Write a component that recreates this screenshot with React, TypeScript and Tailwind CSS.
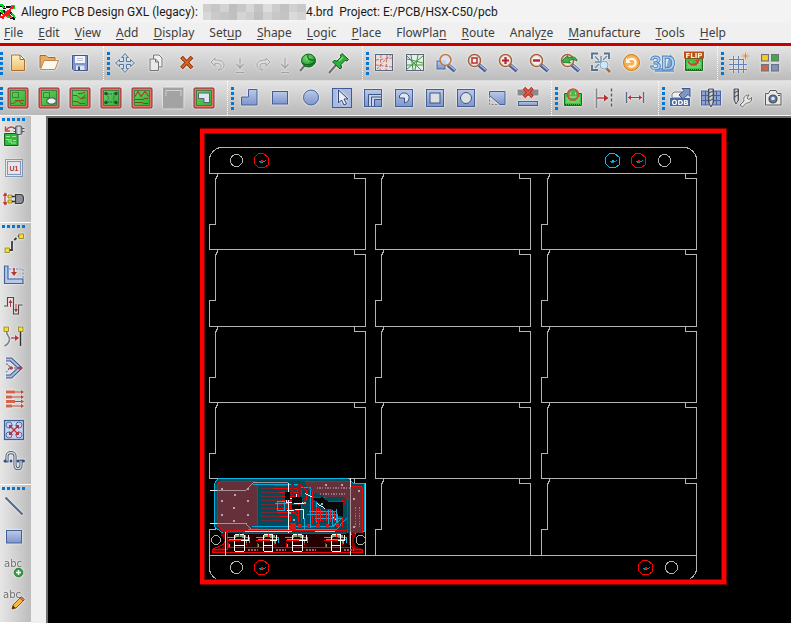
import type { ReactNode } from 'react';

interface Tool {
  name: string;
  icon: ReactNode;
  narrow?: boolean;
  active?: boolean;
}

const MENUS: [string, number][] = [
  ['File', 0],
  ['Edit', 0],
  ['View', 0],
  ['Add', 0],
  ['Display', 0],
  ['Setup', 3],
  ['Shape', 0],
  ['Logic', 0],
  ['Place', 0],
  ['FlowPlan', 7],
  ['Route', 0],
  ['Analyze', 5],
  ['Manufacture', 0],
  ['Tools', 0],
  ['Help', 0],
];

const MASK = [
  'bg-[#cfcfcf]', 'bg-[#c6c6c6]', 'bg-[#d2d2d2]', 'bg-[#bebebe]', 'bg-[#c8c8c8]', 'bg-[#d6d6d6]',
  'bg-[#c4c4c4]', 'bg-[#dcdcdc]', 'bg-[#cccccc]', 'bg-[#c2c2c2]', 'bg-[#d0d0d0]', 'bg-[#c9c9c9]',
  'bg-[#d8d8d8]', 'bg-[#cacaca]', 'bg-[#c5c5c5]', 'bg-[#c0c0c0]', 'bg-[#d4d4d4]', 'bg-[#cdcdcd]',
  'bg-[#bfbfbf]', 'bg-[#d1d1d1]', 'bg-[#c7c7c7]', 'bg-[#c3c3c3]', 'bg-[#dadada]', 'bg-[#d3d3d3]',
];

const Gradients = () => (
  <svg className="absolute size-0" aria-hidden="true">
    <defs>
      <linearGradient id="blue" x1="0" y1="0" x2="0" y2="1">
        <stop offset="0" stopColor="#bccae9" />
        <stop offset="1" stopColor="#7f95ca" />
      </linearGradient>
      <linearGradient id="paper" x1="0" y1="0" x2="0" y2="1">
        <stop offset="0" stopColor="#fdf0c8" />
        <stop offset="1" stopColor="#eebf6c" />
      </linearGradient>
      <linearGradient id="board" x1="0" y1="0" x2="1" y2="1">
        <stop offset="0" stopColor="#6bd05f" />
        <stop offset="1" stopColor="#2fb235" />
      </linearGradient>
      <linearGradient id="metal" x1="0" y1="0" x2="1" y2="0">
        <stop offset="0" stopColor="#6b6f76" />
        <stop offset="0.5" stopColor="#e6e9ee" />
        <stop offset="1" stopColor="#767b84" />
      </linearGradient>
      <radialGradient id="pinhead" cx="0.4" cy="0.3" r="0.7">
        <stop offset="0" stopColor="#7de077" />
        <stop offset="1" stopColor="#148a25" />
      </radialGradient>
    </defs>
  </svg>
);

const Icon = ({ children }: { children: ReactNode }) => (
  <svg viewBox="0 0 24 24" fill="none" className="size-6 shrink-0 overflow-visible drop-shadow-[0_0_1px_#ffffff]" aria-hidden="true">
    {children}
  </svg>
);

const Lens = ({ children }: { children?: ReactNode }) => (
  <>
    <path d="M14 14l7 6" stroke="#4c5f92" strokeWidth="4" />
    <path d="M15 14l6 5" stroke="#a9b9de" strokeWidth="1.5" />
    <circle cx="9.5" cy="9.5" r="6" fill="#eef0f5" stroke="#a4623a" strokeWidth="1.6" />
    <circle cx="9.5" cy="9.5" r="5" stroke="#e2b48e" strokeWidth="0.8" />
    {children}
  </>
);

const GreenBoard = ({ children }: { children: ReactNode }) => (
  <>
    <rect x="2" y="2" width="20" height="20" rx="1" fill="#ea6f68" stroke="#7d2a2c" />
    <rect x="4.5" y="4.5" width="15" height="15" fill="url(#board)" stroke="#2c7a35" strokeWidth="0.8" />
    {children}
  </>
);

const BlueBox = ({ children }: { children?: ReactNode }) => (
  <>
    <rect x="3.5" y="3.5" width="17" height="17" fill="url(#blue)" stroke="#42609a" />
    {children}
  </>
);

const SmallBoard = () => (
  <>
    <path d="M3.5 7.5h17v12h-17z" fill="#43c243" stroke="#1d6a26" />
    <path d="M4 18.500h16" stroke="#145a1c" strokeDasharray="1 1" />
    <path d="M6 11h3v3H6zM15 11h3v3h-3zM5 16h14" stroke="#a6ee98" strokeWidth="0.800" />
  </>
);

const undo = <path d="M9 5L5 9l4 4v-2.500c4 0 6 0 6 2.500s-1 3-3 4c4 0 6-2 6-5 0-4-4-5-9-5z" stroke="#a0a0a0" />;
const drop = <path d="M12 7v9M8.500 13l3.500 4 3.500-4M8 21.500h8" stroke="#a2a2a2" strokeWidth="1.200" />;

const FILE_TOOLS: Tool[] = [
  {
    name: 'New',
    icon: (
      <>
        <path d="M5.500 4H14l4.500 4.500V19.500h-13z" fill="url(#paper)" stroke="#a9722c" />
        <path d="M14 4v4.500h4.500z" fill="#fff3d2" stroke="#a9722c" />
      </>
    ),
  },
  {
    name: 'Open',
    icon: (
      <>
        <path d="M3 17V4.500h6l2 2h7V10" fill="#e9ac5c" stroke="#a9682c" />
        <path d="M3.500 18.500L7 9.500h14.500l-3.500 9z" fill="#fdf7ee" stroke="#b78a5a" />
      </>
    ),
  },
  {
    name: 'Save',
    icon: (
      <>
        <path d="M4.500 4.500h15v15H6L4.500 18z" fill="#7f95ce" stroke="#43558c" />
        <path d="M7 5h10v7H7z" fill="#f4f6fb" />
        <path d="M9 7.500h6M9 9.500h6" stroke="#b8c0d4" />
        <path d="M8 14.500h8.500V19H8z" fill="#dfe4f0" />
        <path d="M10 15.500h2v3.500h-2z" fill="#3d4f88" />
      </>
    ),
  },
];

const EDIT_TOOLS: Tool[] = [
  {
    name: 'Move',
    icon: (
      <path
        d="M12 2.500l3.500 4h-2v4h4v-2l4 3.500-4 3.500v-2h-4v4h2l-3.500 4-3.500-4h2v-4h-4v2l-4-3.500 4-3.500v2h4v-4h-2z"
        fill="#c9d8e8"
        stroke="#4b6a8a"
        strokeWidth="0.900"
      />
    ),
  },
  {
    name: 'Copy',
    icon: (
      <>
        <path d="M9.500 4h5.500l3 3v9H9.500z" fill="#f1f1f1" stroke="#757575" />
        <path d="M6 8h5.500l3 3v8.500H6z" fill="#e9e9e9" stroke="#757575" />
        <path d="M11.500 8v3h3" stroke="#757575" />
      </>
    ),
  },
  {
    name: 'Delete',
    icon: (
      <>
        <path d="M6.500 6l10.500 11M17 6l-10.500 11" stroke="#7d2a08" strokeWidth="3.800" />
        <path d="M7 6.500l9.500 10M16.500 6.500l-9.500 10" stroke="#d9661e" strokeWidth="2" />
      </>
    ),
  },
  { name: 'Undo', icon: <g transform="translate(0 2)">{undo}</g> },
  { name: 'Undo list', icon: drop, narrow: true },
  { name: 'Redo', icon: <g transform="translate(24 2) scale(-1 1)">{undo}</g> },
  { name: 'Redo list', icon: drop, narrow: true },
  {
    name: 'Fix',
    icon: (
      <>
        <path d="M10 13l-6 7" stroke="#6f6f6f" strokeWidth="2" />
        <ellipse cx="12.500" cy="9.500" rx="7" ry="6.500" fill="url(#pinhead)" stroke="#0b5d17" />
        <path d="M7 12c2 3 9 2 12-1M12 4c-1 3 1 6 7 5" stroke="#0b6a18" strokeWidth="1.300" />
      </>
    ),
  },
  {
    name: 'Unfix',
    icon: (
      <>
        <path d="M9 14l-7 8" stroke="#6f6f6f" strokeWidth="2" />
        <path d="M15 2.500l6.500 6-1.500 1.500-2-.5-4 4 .5 3.500-1.500 1-7.500-7 1.500-1.500 3 .5 4-4-.5-2z" fill="#2fae3d" stroke="#0b5d17" />
        <path d="M12 10l4-4" stroke="#88de85" strokeWidth="1.500" />
      </>
    ),
  },
];

const VIEW_TOOLS: Tool[] = [
  {
    name: 'Unrats all',
    icon: (
      <>
        <rect x="3.500" y="3.500" width="17" height="16" fill="#e6dedc" stroke="#5b677e" />
        <path d="M9 4l-1 15M15 4l-1 15M4 9l16-2M4 14l16 2M5 18l8-9 6-5" stroke="#bf625c" strokeWidth="0.900" strokeDasharray="3 1.500" />
      </>
    ),
  },
  {
    name: 'Rats all',
    icon: (
      <>
        <rect x="3.500" y="3.500" width="17" height="16" fill="#e6efe4" stroke="#5b677e" />
        <path d="M8 4l2 15M15 4l-3 15M4 8l16 4M4 14h16M4 18L20 5M4 5l14 14" stroke="#3f9848" />
      </>
    ),
  },
  {
    name: 'Zoom window',
    icon: (
      <>
        <path d="M14 14l7 6" stroke="#4c5f92" strokeWidth="4" />
        <path d="M15 14l6 5" stroke="#a9b9de" strokeWidth="1.500" />
        <rect x="3" y="10" width="8" height="8" fill="url(#blue)" stroke="#4663a0" />
        <circle cx="11.500" cy="9" r="5.500" fill="#cfdcf2" fillOpacity="0.800" stroke="#c07a3c" strokeWidth="1.500" />
      </>
    ),
  },
  { name: 'Zoom fit', icon: <Lens><rect x="7" y="7" width="5" height="5" fill="#fff" stroke="#ba2a30" strokeWidth="1.500" /></Lens> },
  { name: 'Zoom in', icon: <Lens><path d="M6 9.500h7M9.500 6v7" stroke="#b4232c" strokeWidth="2.200" /></Lens> },
  { name: 'Zoom out', icon: <Lens><path d="M6 9.500h7" stroke="#b4232c" strokeWidth="2.400" /></Lens> },
  {
    name: 'Zoom previous',
    icon: (
      <Lens>
        <path d="M4.500 9L10 4.500V7c5-2 9-1 9 3-3-2-6-1.500-8 0L12.500 12 5 11.500z" fill="#3db348" stroke="#146b20" strokeWidth="0.800" />
      </Lens>
    ),
  },
  {
    name: 'Zoom world',
    icon: (
      <>
        <path d="M3 8V2.500h6M15 2.500h5V8M3 14v5h6" stroke="#567089" strokeWidth="1.800" />
        <path d="M6 5.500l4 4M18 5l-4 4M6 17l4-4M12 5v12M6 11h12" stroke="#6b87a2" strokeWidth="1.300" />
        <path d="M17 17l4 4" stroke="#ab6b32" strokeWidth="2.500" />
        <circle cx="15" cy="14" r="4" fill="#cde6f8" stroke="#88aac4" />
      </>
    ),
  },
  {
    name: 'Refresh',
    icon: (
      <>
        <circle cx="11.500" cy="11.500" r="8" fill="#f8b04e" stroke="#c27420" />
        <path d="M7.500 10c2-3.500 8-2.500 8 1.500s-4 5-7 3.500" stroke="#fff8e8" strokeWidth="2.200" />
        <path d="M6 6.500V12h5z" fill="#fff8e8" />
      </>
    ),
  },
  {
    name: '3D view',
    icon: (
      <>
        <path d="M4 21h19V7l-4-4-4 14H4z" fill="#7ea6d4" />
        <text x="-1" y="19" fontSize="20" fontWeight="700" className="font-['Liberation_Sans']" fill="#b4d1ef" stroke="#4a80b8" strokeWidth="0.900">3D</text>
      </>
    ),
  },
  {
    name: 'Flip design',
    icon: (
      <>
        <SmallBoard />
        <path d="M6.500 10c1 5 9 5 10-1l-3 1" stroke="#d0413a" strokeWidth="1.800" />
        <rect x="2" y="0.500" width="20" height="7" fill="#bd4f14" />
        <text x="12" y="6.500" fontSize="7" fontWeight="700" textAnchor="middle" fill="#fff3d8" className="font-['DejaVu_Sans']">FLIP</text>
      </>
    ),
  },
];

const GRID_TOOLS: Tool[] = [
  {
    name: 'Grid toggle',
    icon: (
      <>
        <path d="M6.500 5v17M11.500 5v17M16.500 8v14M2 8.500h15M2 13.500h18M2 18.500h18" stroke="#6480b8" />
        <path d="M18.500 1v8M14.500 5h8M16 2.500l5 5M21 2.500l-5 5" stroke="#d3832c" strokeWidth="0.800" />
      </>
    ),
  },
  {
    name: 'Color',
    icon: (
      <g stroke="#70737c" strokeWidth="1.200">
        <rect x="3.500" y="3.500" width="7" height="6.500" fill="#f9cb20" />
        <rect x="13.500" y="3.500" width="7" height="6.500" fill="#40ad42" />
        <rect x="3.500" y="13.500" width="7" height="6.500" fill="#ce684a" />
        <rect x="13.500" y="13.500" width="7" height="6.500" fill="#7d92c9" />
      </g>
    ),
  },
  { name: 'Shadow mode', icon: <rect x="3.500" y="4" width="17" height="16" fill="#cfd3da" stroke="#b8bbc2" /> },
];

const APP_MODE_TOOLS: Tool[] = [
  {
    name: 'General edit',
    icon: (
      <GreenBoard>
        <rect x="6.500" y="6.500" width="6" height="5" stroke="#174c1d" strokeDasharray="1 1" />
        <path d="M5 17.500c5 0 5-3 8-3h5M9 14.500h4l2 3h2" stroke="#8e4a24" />
      </GreenBoard>
    ),
  },
  {
    name: 'Placement edit',
    icon: (
      <GreenBoard>
        <rect x="6.500" y="6.500" width="6" height="5" stroke="#174c1d" strokeDasharray="1 1" />
        <path d="M10 13h2v-1h5v1h2v4h-2v1h-5v-1h-2z" fill="#eef0f5" stroke="#4a5460" />
      </GreenBoard>
    ),
  },
  {
    name: 'Etch edit',
    icon: (
      <GreenBoard>
        <path d="M5 9.500h4l3 3h2l4-1M10 7.500h3l4-1M5 15.500h4l3 2h5M17.500 9l-4 3.500" stroke="#8a4a20" />
      </GreenBoard>
    ),
  },
  {
    name: 'Flow planning',
    icon: (
      <GreenBoard>
        <path d="M9 8h6M9 16h6M8 9.500c2 2 2 3 0 5M16 9.500c-2 2-2 3 0 5" stroke="#20408c" strokeWidth="0.900" strokeDasharray="1.500 1" />
        <circle cx="7" cy="7.500" r="1.800" fill="#24503c" />
        <circle cx="17" cy="7.500" r="1.800" fill="#24503c" />
        <circle cx="7" cy="16.500" r="1.800" fill="#24503c" />
        <circle cx="17" cy="16.500" r="1.800" fill="#24503c" />
      </GreenBoard>
    ),
  },
  {
    name: 'Signal integrity',
    icon: (
      <GreenBoard>
        <path d="M5 10.500l3-5 3 5 4-5 4 5" stroke="#b03c2c" strokeWidth="1.200" />
        <path d="M5 13.500h8l2-1h3M5 16.500h7l2 1h4" stroke="#7c4a22" />
      </GreenBoard>
    ),
  },
  {
    name: 'RF edit',
    icon: (
      <>
        <rect x="2" y="1.500" width="20.500" height="21" fill="#a3a3a3" />
        <path d="M5 10V4.500h15V10" stroke="#d2d2d2" />
      </>
    ),
  },
  {
    name: 'Shape edit',
    icon: (
      <GreenBoard>
        <path d="M6.500 7h11v9.500H12v-4H6.500z" fill="#dfe5f0" stroke="#56617a" />
      </GreenBoard>
    ),
  },
];

const SHAPE_TOOLS: Tool[] = [
  { name: 'Add polygon', icon: <path d="M11.500 3.500h8.500v15.500H4.500v-8h7z" fill="url(#blue)" stroke="#42609a" /> },
  { name: 'Add rectangle', icon: <rect x="4.500" y="5.500" width="15" height="12.500" fill="url(#blue)" stroke="#42609a" /> },
  { name: 'Add circle', icon: <circle cx="12" cy="11.500" r="7.500" fill="url(#blue)" stroke="#42609a" /> },
  {
    name: 'Select shape',
    active: true,
    icon: <path d="M8.500 4v13l3-3 2.500 5 2.500-1-2.500-5h4z" fill="#eceff7" stroke="#2e4470" />,
  },
  {
    name: 'Shape void polygon',
    icon: (
      <BlueBox>
        <path d="M7.500 20V8.500H20v5h-6V20z" fill="#c9d4ee" />
        <path d="M7.500 20V8.500H20M10.500 20v-9H20M13.500 20v-6.500H20" stroke="#3d5584" />
      </BlueBox>
    ),
  },
  {
    name: 'Void element',
    icon: (
      <BlueBox>
        <path d="M7.500 10a5 5 0 1 1 5 7v-5h-5z" fill="#e1e6f3" stroke="#3d5584" />
      </BlueBox>
    ),
  },
  { name: 'Void rectangle', icon: <BlueBox><rect x="7" y="7" width="10" height="10" fill="#dedfe3" stroke="#3d5584" /></BlueBox> },
  { name: 'Void circle', icon: <BlueBox><circle cx="12" cy="12" r="5.500" fill="#dedfe3" stroke="#3d5584" /></BlueBox> },
  {
    name: 'Island delete',
    icon: (
      <>
        <path d="M4.500 5.500h15.500v13h-5l-10.500-9z" fill="url(#blue)" stroke="#42609a" />
        <path d="M4.500 10v8.500h10" stroke="#7b7f89" strokeDasharray="2 1.500" />
      </>
    ),
  },
  {
    name: 'Delete islands',
    icon: (
      <>
        <rect x="1.500" y="3.500" width="21" height="6" fill="#8b8b8b" />
        <path d="M8 2l8.500 9M16.500 2l-8.500 9" stroke="#b52c20" strokeWidth="3.400" />
        <path d="M8.500 2.500l7.500 8M16 2.500l-7.500 8" stroke="#e3604b" strokeWidth="1.600" />
        <rect x="2.500" y="15.500" width="19" height="4" fill="url(#blue)" stroke="#42609a" />
      </>
    ),
  },
];

const DIMENSION_TOOLS: Tool[] = [
  {
    name: 'Dimension environment',
    icon: (
      <>
        <SmallBoard />
        <circle cx="12" cy="8.500" r="5.500" fill="#52b64c" stroke="#d9483f" strokeWidth="1.700" />
        <path d="M9.500 6.500v2M14.500 6.500v2M8.500 11h7" stroke="#a6ee98" />
      </>
    ),
  },
  {
    name: 'Align',
    icon: (
      <>
        <path d="M4.500 2.500V22" stroke="#80858e" strokeWidth="1.500" />
        <path d="M19.500 2.500V22" stroke="#555c68" strokeWidth="1.500" strokeDasharray="3 2" />
        <path d="M5 12h8" stroke="#b52d33" strokeWidth="1.300" />
        <path d="M12 8.500l4.500 3.500-4.500 3.500z" fill="#b52d33" />
      </>
    ),
  },
  {
    name: 'Linear dimension',
    icon: (
      <>
        <path d="M3.500 6v11M20.500 6v11" stroke="#576a88" strokeWidth="1.400" />
        <path d="M5 11.500h14" stroke="#b8363a" />
        <path d="M5 11.500l3-2.500v5zM19 11.500L16 9v5z" fill="#b8363a" />
      </>
    ),
  },
];

const OUTPUT_TOOLS: Tool[] = [
  {
    name: 'ODB++ export',
    icon: (
      <>
        <path d="M6 6h8v6H4V8z" fill="#eee" stroke="#777" />
        <path d="M11 9l5-4.500-2-2h8v8l-2-2-5 4.500z" fill="#7f96c4" stroke="#3c5589" />
        <rect x="2" y="12" width="20" height="8" fill="#4967a3" />
        <text x="12" y="18.500" fontSize="7" fontWeight="700" textAnchor="middle" fill="#fff" className="font-['DejaVu_Sans']">ODB</text>
      </>
    ),
  },
  {
    name: 'Drill legend',
    icon: (
      <>
        <rect x="2.500" y="5" width="19" height="14" fill="#8fa3d0" stroke="#4a62a0" />
        <path d="M2 9.500h20M2 14.500h20M6.500 5v14M17.500 5v14" stroke="#4a62a0" />
        <path d="M9.500 3h5v13L12 21l-2.500-5z" fill="url(#metal)" stroke="#474c54" />
        <path d="M10 7l4-2M10 11l4-2M10 15l4-2" stroke="#41464e" />
      </>
    ),
  },
  {
    name: 'NC parameters',
    icon: (
      <>
        <path d="M4 3h4.500v11L6 18l-2-4z" fill="url(#metal)" stroke="#474c54" />
        <path d="M4 7l4-2M4 11l4-2" stroke="#41464e" />
        <path d="M10 19l4-4c-1-4 1-6 5-6l-2 3 2 1.500 2.500-2c.5 4-1.500 5.500-5 5.500l-4 4z" fill="#e7e7e7" stroke="#666" />
      </>
    ),
  },
  {
    name: 'Snapshot',
    icon: (
      <>
        <path d="M4.500 7.500h3l1.500-3h6l1.500 3H20V19H4.500z" fill="#e9e9ea" stroke="#595959" />
        <circle cx="12" cy="13" r="4" fill="#62779c" stroke="#4b4b4b" strokeWidth="1.200" />
        <circle cx="12" cy="12.500" r="1.800" fill="#dce9f8" />
        <path d="M17 9.500h2" stroke="#555" />
      </>
    ),
  },
];

const PLACE_TOOLS: Tool[] = [
  {
    name: 'Place manual',
    icon: (
      <>
        <path d="M2.500 8.500H16v12H2.500z" fill="#33b83d" stroke="#0e641a" />
        <path d="M4 11.500h4M10 11.500h4M4 14.500h3v3M9 14v4h5M11 15.500h3" stroke="#a6f09e" strokeWidth="0.900" />
        <path d="M13 3.500C10 1 6 2 4.500 5M3.500 1.500V6H8" stroke="#c4433a" strokeWidth="1.500" />
        <path d="M11.500 3.500h2M11.500 6.500h2M20 3.500h2.500M20 6.500h2.500" stroke="#555" />
        <rect x="13.500" y="1" width="6.500" height="8.500" rx="1.500" fill="url(#metal)" stroke="#4d525b" />
      </>
    ),
  },
  {
    name: 'Place by refdes',
    icon: (
      <>
        <rect x="3.500" y="3.500" width="17" height="17" stroke="#31508f" strokeDasharray="1 1" />
        <rect x="5.500" y="5.500" width="13" height="13" fill="#e4e5ea" stroke="#8094ba" />
        <text x="12" y="14.500" fontSize="7" fontWeight="700" textAnchor="middle" fill="#b5383a" className="font-['Liberation_Sans']">U1</text>
      </>
    ),
  },
  {
    name: 'Swap components',
    icon: (
      <>
        <path d="M5 7H3v10h2M1.500 9L3 6.500 4.500 9M1.500 15L3 17.500 4.500 15" stroke="#bb352f" strokeWidth="1.200" />
        <path d="M6 8h4v3H6zM6 13h4v3H6z" fill="#f4d728" stroke="#8c761c" strokeWidth="0.800" />
        <path d="M10 9.500h4M10 14.500h4" stroke="#333" strokeWidth="1.500" />
        <path d="M13.500 7.500h5c4 0 4 9 0 9h-5z" fill="#8c8f95" stroke="#393b40" strokeWidth="1.200" />
      </>
    ),
  },
];

const yellowPad = (x: number, y: number) => (
  <rect x={x} y={y} width="4.500" height="4.500" fill="#f7df2e" stroke="#8c7c1c" strokeWidth="0.800" />
);

const ROUTE_TOOLS: Tool[] = [
  {
    name: 'Add connect',
    icon: (
      <>
        <path d="M7 18h3V10l8-7" stroke="#3b3b3b" strokeWidth="1.800" strokeDasharray="12 2 3 2" />
        {yellowPad(3, 16)}
        {yellowPad(17, 2)}
      </>
    ),
  },
  {
    name: 'Slide',
    icon: (
      <>
        <path d="M7 6h14v10H7" stroke="#6d8dc4" strokeDasharray="2 1.500" />
        <path d="M2.500 3H6v13h15v4.500H2.500z" fill="#b8c8e8" stroke="#42609a" strokeWidth="1.200" />
        <path d="M12 5v5" stroke="#b6343c" strokeWidth="1.500" />
        <path d="M9 9h6l-3 4z" fill="#b6343c" />
      </>
    ),
  },
  {
    name: 'Delay tune',
    icon: (
      <>
        <path d="M2 12h3.500V3.500H11.500V20h5v-9h4" stroke="#494949" strokeWidth="1.200" />
        <path d="M8.500 13V7M14 10v6" stroke="#b6343c" />
        <path d="M6.500 9l2-3.500 2 3.500zM12 15l2 3.500 2-3.500z" fill="#b6343c" />
      </>
    ),
  },
  {
    name: 'Custom smooth',
    icon: (
      <>
        <path d="M4.500 6c0 5 3 5 3 8s-1 5-5 7" stroke="#7a7f88" strokeWidth="1.600" />
        <path d="M18.500 6v15" stroke="#333" strokeWidth="1.500" />
        <path d="M9 13h6" stroke="#c22f35" strokeWidth="1.300" />
        <path d="M13 10l4 3-4 3z" fill="#c22f35" />
        {yellowPad(2, 2)}
        {yellowPad(16.500, 2)}
      </>
    ),
  },
  {
    name: 'Differential pair',
    icon: (
      <>
        <path d="M4 3.500h5l9 8.500-9 8.500H4" stroke="#3b5688" strokeWidth="4.200" />
        <path d="M4 3.500h5l9 8.500-9 8.500H4" stroke="#a9bce2" strokeWidth="2.200" />
        <path d="M4 8c6 0 2 8 0 8M9 12h8" stroke="#3b5688" strokeDasharray="2 1" />
        <circle cx="9" cy="12" r="1.800" fill="#c0353a" />
        <circle cx="18" cy="12" r="1.800" fill="#c0353a" />
      </>
    ),
  },
  {
    name: 'Fanout',
    icon: (
      <>
        <path d="M4 5h9M4 10h6M4 14.500h9M4 19h6" stroke="#d4644c" strokeWidth="3.200" />
        <path d="M13 5h7M10 10h10M13 14.500h7M10 19h10" stroke="#c2442e" />
        <path d="M19 3l3 2-3 2zM19 8l3 2-3 2zM19 12.500l3 2-3 2zM19 17l3 2-3 2z" fill="#c2442e" />
      </>
    ),
  },
  {
    name: 'Auto route',
    icon: (
      <>
        <rect x="2.500" y="2.500" width="19" height="19" fill="#c6d2ee" stroke="#3f5b98" strokeWidth="1.300" />
        <circle cx="7" cy="7" r="3" stroke="#526fa8" />
        <circle cx="17" cy="7" r="3" stroke="#526fa8" />
        <circle cx="7" cy="17" r="3" stroke="#526fa8" />
        <circle cx="17" cy="17" r="3" stroke="#526fa8" />
        <path d="M8 8l8 8M16 8l-8 8" stroke="#bc3038" strokeWidth="1.300" />
        <path d="M7 7h4l-4 4zM17 7v4l-4-4zM7 17v-4l4 4zM17 17h-4l4-4z" fill="#bc3038" />
      </>
    ),
  },
  {
    name: 'Phase tune',
    icon: (
      <>
        <path d="M3 12h2V7c0-4.500 8-4.500 8 0v9c0 5 6 5 6 0v-4h2" stroke="#526078" strokeWidth="3.200" />
        <path d="M5 12V7c0-4.500 8-4.500 8 0v9c0 5 6 5 6 0v-4" stroke="#dfe3ea" strokeWidth="1.200" />
        <circle cx="3" cy="12" r="1.500" fill="#314e86" />
        <circle cx="9" cy="12" r="1.500" fill="#314e86" />
        <circle cx="16" cy="12" r="1.500" fill="#314e86" />
        <circle cx="21.500" cy="12" r="1.500" fill="#314e86" />
      </>
    ),
  },
];

const DRAW_TOOLS: Tool[] = [
  { name: 'Add line', icon: <path d="M3.500 3.500l17 17" stroke="#4f668f" strokeWidth="2" /> },
  { name: 'Add rectangle outline', icon: <rect x="4.500" y="5.500" width="15" height="12.500" fill="url(#blue)" stroke="#42609a" /> },
  {
    name: 'Add text',
    icon: (
      <>
        <text x="2" y="11" fontSize="10" className="font-['DejaVu_Sans']" fill="#707070">abc</text>
        <circle cx="16.500" cy="16.500" r="4.300" fill="#2ea337" stroke="#187022" strokeWidth="0.800" />
        <path d="M14 16.500h5M16.500 14v5" stroke="#fff" strokeWidth="1.500" />
      </>
    ),
  },
  {
    name: 'Edit text',
    icon: (
      <>
        <text x="1" y="11" fontSize="10" className="font-['DejaVu_Sans']" fill="#707070">abc</text>
        <path d="M10 22l1-4 8-8 3 3-8 8z" fill="#f6b93c" stroke="#8f5418" />
        <path d="M18 11l3 3 1.500-1.500-3-3z" fill="#e5705a" stroke="#8f3b2a" strokeWidth="0.700" />
        <path d="M10 22l1-3.500 2.500 2.500z" fill="#3a2a1a" />
      </>
    ),
  },
];

const ToolButton = ({ tool }: { tool: Tool }) => (
  <button
    type="button"
    aria-label={tool.name}
    className={`flex h-[31px] shrink-0 items-center justify-center ${tool.narrow ? 'w-[14px]' : 'w-[31px]'}`}
  >
    {tool.active ? (
      <span className="flex size-5 items-center justify-center border border-[#3f5b94] bg-[#a9b9e0]">
        <Icon>{tool.icon}</Icon>
      </span>
    ) : (
      <Icon>{tool.icon}</Icon>
    )}
  </button>
);

const Handle = ({ vertical }: { vertical?: boolean }) => (
  <div className={vertical ? 'mt-[2px] ml-[2px] flex gap-[2px]' : 'mr-[-1px] ml-[3px] flex flex-col gap-[2px]'}>
    {[0, 1, 2, 3, 4].map((i) => (
      <span key={i} className="size-[3px] bg-[#0078d7]" />
    ))}
  </div>
);

const ToolGroup = ({ label, tools }: { label: string; tools: Tool[] }) => (
  <div role="group" aria-label={label} className="flex shrink-0 items-center border-r border-dotted border-white pr-2">
    <Handle />
    {tools.map((tool) => (
      <ToolButton key={tool.name} tool={tool} />
    ))}
  </div>
);

const SideGroup = ({ label, tools }: { label: string; tools: Tool[] }) => (
  <div
    role="group"
    aria-label={label}
    className="flex flex-col border-b border-white bg-linear-to-r from-[#e6e6e6] to-[#bdbdbd] pb-2"
  >
    <Handle vertical />
    <div className="-ml-[2px] flex flex-col">
      {tools.map((tool) => (
        <ToolButton key={tool.name} tool={tool} />
      ))}
    </div>
  </div>
);

const COLUMNS = [9, 175, 341];
const ROWS = [45, 121, 198, 274, 350];

const Fiducial = ({ x, y, color }: { x: number; y: number; color: string }) => (
  <>
    <path d={`M${x - 3} ${y - 7}h5l5 4v7l-4 3h-6l-4-4v-6z`} stroke={color} />
    <path d={`M${x - 3} ${y + 1}h2v1h1M${x + 3} ${y + 1}h-2v1M${x + 3} ${y}h1`} stroke="#1787a8" />
    <path d={`M${x - 1} ${y}h2`} stroke={color} strokeWidth="2" />
  </>
);

// routed circuit, drawn on a grid of a third of a pixel
const Circuit = () => (
  <g transform="translate(5 342) scale(0.33333)" strokeWidth="3">
    <path d="M28 40l12-14h390l14 14h36v146h-22l-12 8H60l-32-24z" fill="#004c5a" stroke="#00b4e4" />
    <path d="M37 42l8-7h112v150H58l-21-20z" fill="#66303a" stroke="#f00808" />
    <path d="M300 36h138v14h34v138h-40V92l-14-12h-60l-48-20z" fill="#66303a" />
    <path d="M300 36h138v14h34v138" stroke="#f00808" />
    <path d="M15 61h22M15 160h22M436 25v25" stroke="#e8e8e8" />
    <path d="M37 61h86l22-23h105v15M37 160h86l20 24M436 50v135" stroke="#a89094" />
    <path d="M145 44h140v10h30M140 170h245l30-30M130 178h265l30-34M335 160V90h20M318 52V175" stroke="#00a8e0" />
    {[55, 67, 79, 91, 103, 115, 127, 139, 151].map((y) => (
      <path key={y} d={`M168 ${y}h${y > 120 ? 70 : 92}`} stroke="#7c2630" />
    ))}
    <path
      d="M208 48h82l14 12v30M205 57h70l12 14M222 67h58v88M230 79h42v20h22M228 91h30v20h32M212 115h50l20 10v30M218 127h50l14 14M224 139h34v14h-8v30M290 60v95M306 48l16 14v100M316 84h48M320 96h90M412 90v80M428 84v138M324 78l60 50M372 112v50M340 112v50M352 122v30M332 122v30"
      stroke="#f00"
    />
    <path d="M250 38v150M244 69v30h50M266 123h-20M246 87h20M274 73v10M296 117v30M335 100l26 16M377 132l16 18M300 70l20 10M266 102h30M270 120h26" stroke="#f4f4f4" strokeWidth="3" />
    <path d="M320 86l24 14 20 18h16l14 18 20 4v-44h-42l-20-14zM240 66h14v24h-14zM262 82h30v16h-30zM262 104h26v14h-26z" fill="#080808" />
    <path d="M306 134h92v22l-14 12M312 126h80M330 146h80M300 144v34M370 120v50M382 120v50M396 118v50M218 94h20v28h-20zM210 102h38" stroke="#18a6d8" />
    <path d="M336 112v40M348 118v36M364 122v32M376 116v40M390 122v32" stroke="#e82020" />
    <path d="M262 40v36M284 42v32M300 84v20M418 84v20" stroke="#8a1822" strokeWidth="8" />
    <path d="M335 54h102M345 72h76M452 112v58M464 112v58" stroke="#8e7484" strokeWidth="4" strokeDasharray="4 4" />
    {[[50, 56], [128, 56], [90, 74], [50, 94], [128, 94], [86, 114], [50, 134], [128, 134], [88, 152], [362, 44], [410, 44], [462, 64], [446, 86], [350, 102], [254, 128], [268, 150], [446, 172], [300, 100]].map(
      ([x, y]) => (
        <rect key={`${x}-${y}`} x={x - 3} y={y - 3} width="6" height="6" fill="#aaa" />
      ),
    )}
    <path d="M255 158h18v22h-18zM280 162h10v12h-10zM306 162h10v12h-10zM334 162h10v12h-10zM362 162h10v12h-10zM392 160h10v12h-10z" fill="#d01818" />
    <path d="M60 188h372v60H22v-10l30-16 10-12z" fill="#250000" />
    <path d="M60 186l-14 6 14 20-6 20-32 8v6h40zM440 186l14 6-8 18 6 20 22 8v10h-34z" fill="#8a0000" />
    <path d="M46 176l22 14v48H22v10h450v-10h-22l-16-14v-42M22 238l32-14 8-14v-24M68 234h366M64 182l40-1h326M110 190h314" stroke="#f00000" />
    <path d="M62 185v70M436 185v70M120 186h140M330 186h60" stroke="#ddd" />
    {[84, 170, 258, 374].map((x) => (
      <g key={x}>
        <path d={`M${x + 4} 198h36M${x - 10} 222v10M${x + 40} 214v8`} stroke="#80a860" strokeWidth="4" />
        <path d={`M${x - 12} 208h62M${x - 18} 202h28M${x + 26} 202h24v16`} stroke="#18b6e0" />
        <path d={`M${x + 6} 194v50M${x + 6} 194h28v50M${x + 6} 212h40v-16M${x + 6} 226h28M${x + 6} 244h28`} stroke="#fff" />
        <path d={`M${x - 16} 212h40M${x - 12} 220v14M${x + 20} 190v12M${x + 40} 218v8`} stroke="#f00" />
        <path d={`M${x + 44} 240h30`} stroke="#98606a" strokeWidth="6" strokeDasharray="6 3" />
      </g>
    ))}
    <circle cx="33" cy="210" r="14" fill="#000" stroke="#b0b0b0" />
    <circle cx="467" cy="210" r="14" fill="#000" stroke="#b0b0b0" />
  </g>
);

const Board = () => (
  <svg
    viewBox="0 0 528 457"
    fill="none"
    shapeRendering="crispEdges"
    role="img"
    aria-label="Panel drawing"
    className="mt-[10px] ml-[152px] h-[457px] w-[528px] shrink-0"
  >
    <g transform="translate(0.5 0.5)">
      <g stroke="#b4b4b4">
        <path d="M9 45V31c0-6 6-12 12-12h463c6 0 12 6 12 12v14M9 427v13c0 6 6 12 12 12h463c6 0 12-6 12-12v-13M9 45h487M9 427h487" />
        {ROWS.map((y, row) =>
          COLUMNS.map((x, col) => {
            const bottom = ROWS[row + 1] ?? 427;
            const right = [165, 330, 496][col];
            return (
              <path
                key={`${x}-${y}`}
                d={`M${x + 8} ${y}v2l-2 4V${y + 51}H${x}V${bottom}H${right}V${y + 5}H${right - 11}V${y}`}
              />
            );
          }),
        )}
        <circle cx="36" cy="32" r="6" />
        <circle cx="464" cy="32" r="6" />
        <circle cx="36" cy="439" r="6" />
        <circle cx="471" cy="439" r="6" />
      </g>
      <Fiducial x={61} y={32} color="#f00" />
      <Fiducial x={412} y={32} color="#18b8ee" />
      <Fiducial x={438} y={32} color="#f00" />
      <Fiducial x={61} y={439} color="#f00" />
      <Fiducial x={445} y={439} color="#f00" />
    </g>
    <Circuit />
    <rect x="2" y="3" width="522" height="451" stroke="#7a0000" strokeWidth="6" />
    <rect x="2" y="3" width="522" height="451" stroke="#f00" strokeWidth="4" />
  </svg>
);

const TitleBar = () => (
  <header className="flex h-[23px] items-center bg-[#f3f3f3] font-['Roboto',sans-serif] text-[12px] leading-4 whitespace-pre text-[#1a1a1a]">
    <svg viewBox="0 0 16 16" fill="none" shapeRendering="crispEdges" className="mr-[5px] size-4 shrink-0" aria-hidden="true">
      <path d="M0 2h3l2 3M6 3h5l3-1M0 10l4-3 3 4 4-2 3 3v3l-5-2" stroke="#111" strokeWidth="2" />
      <path d="M0 1h2l2 3M11 2h3v3M1 6l2 3M12 9l3 5M7 13h5" stroke="#00d820" strokeWidth="2" />
      <path d="M0 12l3 2 3-6 2 3 3-7 3-1M8 6l2 7M2 10l5 2" stroke="#f01818" strokeWidth="2" />
    </svg>
    <h1 className="font-normal">Allegro PCB Design GXL (legacy):</h1>
    <div className="ml-[5px] grid h-4 w-[103px] grid-cols-12" aria-hidden="true">
      {MASK.map((shade, i) => (
        <span key={i} className={shade} />
      ))}
    </div>
    <p>4.brd  Project: E:/PCB/HSX-C50/pcb</p>
  </header>
);

export default function App() {
  return (
    <div className="flex min-h-screen flex-col overflow-hidden bg-[#f0f0f0]">
      <Gradients />
      <TitleBar />
      <nav className="flex h-5 items-center gap-[15px] bg-[#f0f0f0] pl-1 font-['Noto_Sans',sans-serif] text-[12px] leading-5 text-[#404040]">
        {MENUS.map(([name, key]) => (
          <button key={name} type="button" className="shrink-0">
            {name.slice(0, key)}
            <u className="underline-offset-2">{name[key]}</u>
            {name.slice(key + 1)}
          </button>
        ))}
      </nav>
      <div className="h-[3px] bg-[#c80000]" />
      <div className="-ml-[3px] flex h-[34px] overflow-hidden bg-linear-to-b from-[#e4e4e4] to-[#bcbcbc]">
        <ToolGroup label="File" tools={FILE_TOOLS} />
        <ToolGroup label="Edit" tools={EDIT_TOOLS} />
        <ToolGroup label="View" tools={VIEW_TOOLS} />
        <ToolGroup label="Setup" tools={GRID_TOOLS} />
      </div>
      <div className="-ml-[3px] flex h-[36px] overflow-hidden border-y border-t-[#dcdcdc] border-b-[#f4f4f4] bg-linear-to-b from-[#e4e4e4] to-[#b8b8b8]">
        <ToolGroup label="Application mode" tools={APP_MODE_TOOLS} />
        <ToolGroup label="Shape" tools={SHAPE_TOOLS} />
        <ToolGroup label="Dimension" tools={DIMENSION_TOOLS} />
        <ToolGroup label="Manufacture" tools={OUTPUT_TOOLS} />
      </div>
      <div className="flex flex-1">
        <aside className="w-[31px] shrink-0 overflow-hidden bg-[#d0d0d0]">
          <SideGroup label="Place" tools={PLACE_TOOLS} />
          <SideGroup label="Route" tools={ROUTE_TOOLS} />
          <SideGroup label="Draw" tools={DRAW_TOOLS} />
        </aside>
        <main className="ml-[15px] flex flex-1 items-start overflow-hidden border-t-2 border-l-2 border-[#6e6e6e] bg-black">
          <Board />
        </main>
      </div>
    </div>
  );
}
